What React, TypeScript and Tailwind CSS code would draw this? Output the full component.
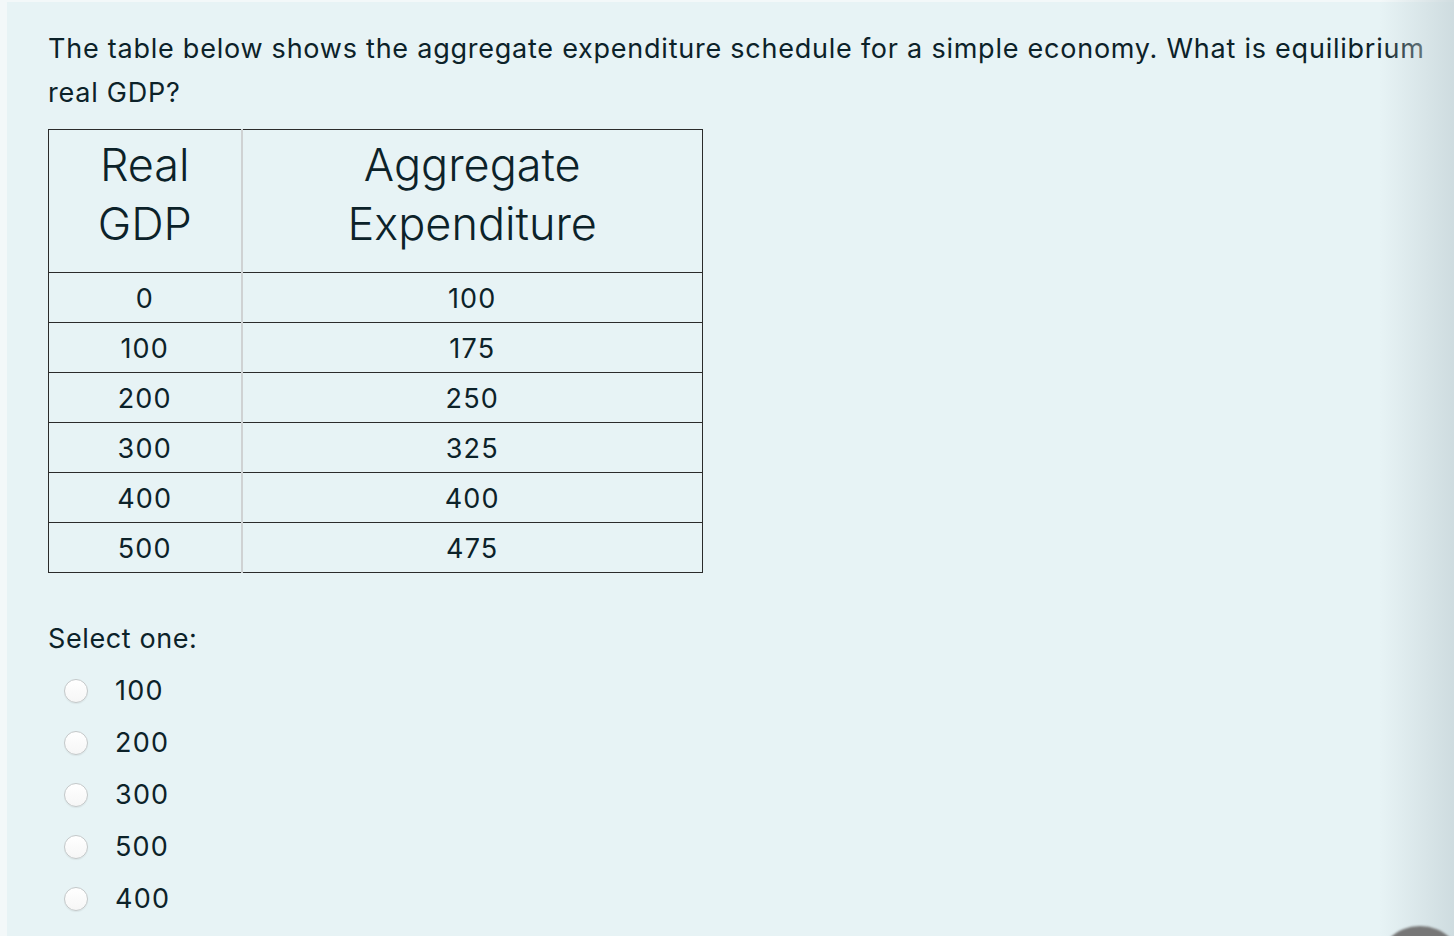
import React from "react";

const rows = [
  ["0", "100"],
  ["100", "175"],
  ["200", "250"],
  ["300", "325"],
  ["400", "400"],
  ["500", "475"],
];

const options = ["100", "200", "300", "500", "400"];

export default function App() {
  return (
    <div
      className="relative w-[1454px] h-[936px] overflow-hidden bg-[#f3f8f9] pt-[2px] pl-[7px]"
      style={{ fontFamily: "Inter, 'Noto Sans', sans-serif" }}
    >
      <div className="w-full h-full bg-[#e7f3f5] text-[#0c2229] pl-[41px] pt-[25px]">
        <p className="text-[27px] leading-[44px] w-[1390px] tracking-[0.76px]">
          The table below shows the aggregate expenditure schedule for a simple economy. What is equilibrium real GDP?
        </p>
        <table className="mt-[14px] border-collapse border border-[#2b2b2b] text-center">
          <thead>
            <tr className="h-[143px] border-b border-[#2b2b2b]">
              <th className="w-[193px] font-light text-[45px] leading-[59px] border-r-2 border-[#cfd2d3] pb-[14px]">
                Real
                <br />
                GDP
              </th>
              <th className="w-[461px] font-light text-[45px] leading-[59px] pb-[14px]">
                Aggregate
                <br />
                Expenditure
              </th>
            </tr>
          </thead>
          <tbody>
            {rows.map(([a, b]) => (
              <tr key={a} className="h-[50px] border-b border-[#2b2b2b]">
                <td className="text-[27px] tracking-[1.2px] border-r-2 border-[#cfd2d3] pt-[3px]">{a}</td>
                <td className="text-[27px] tracking-[1.2px] pt-[3px]">{b}</td>
              </tr>
            ))}
          </tbody>
        </table>
        <p className="mt-[48px] text-[27px] leading-[36px] tracking-[0.6px]">Select one:</p>
        <div className="mt-[16px] flex flex-col gap-[16px] pl-[16px]">
          {options.map((o) => (
            <div key={o} className="flex items-center h-[36px]">
              <span className="w-[24px] h-[24px] rounded-full border border-[#c4c8c9] bg-gradient-to-b from-white to-[#f6f6f6] shadow-[0_1px_1px_rgba(0,0,0,0.06)]" />
              <span className="ml-[27px] text-[27px] tracking-[1.2px]">{o}</span>
            </div>
          ))}
        </div>
      </div>
      <div className="absolute top-0 right-0 w-[74px] h-full bg-gradient-to-r from-transparent to-[#c8d6da]/80 pointer-events-none" />
      <div className="absolute left-[1376px] top-[926px] w-[88px] h-[88px] rounded-full bg-[#777] blur-[1px]" />
    </div>
  );
}
